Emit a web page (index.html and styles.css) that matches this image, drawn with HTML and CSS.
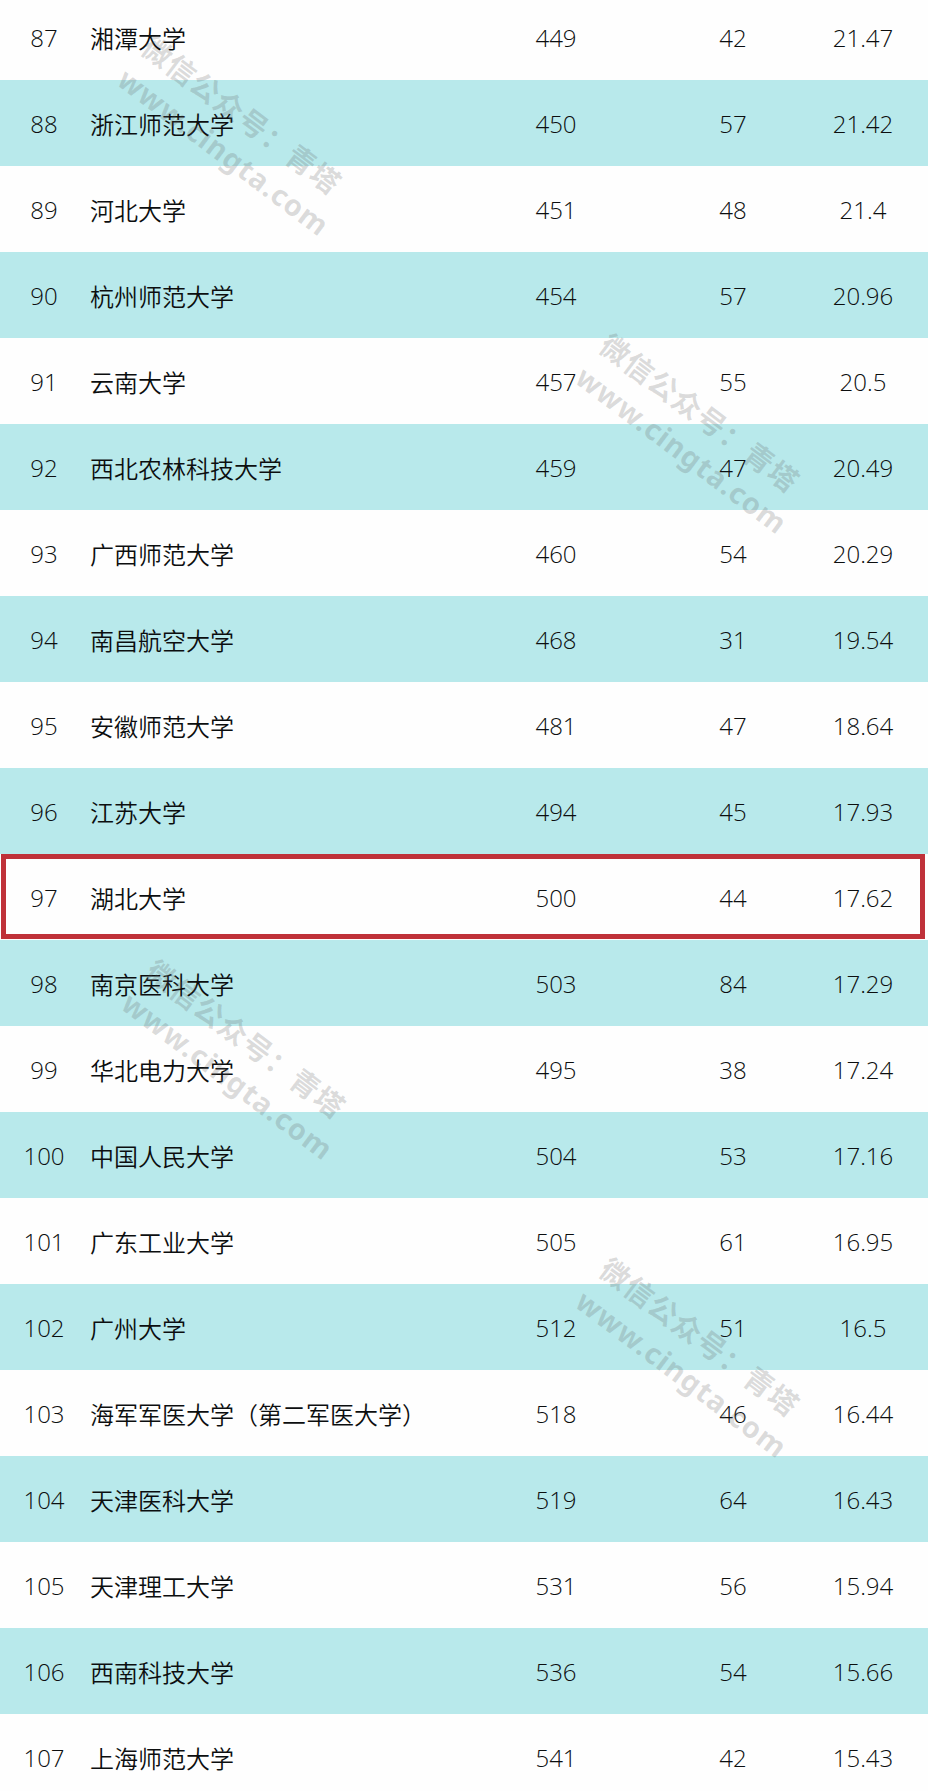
FILE: index.html
```html
<!DOCTYPE html>
<html lang="zh-CN">
<head>
<meta charset="utf-8">
<title>排名</title>
<link rel="stylesheet" href="styles.css">
</head>
<body>
<div class="page">
  <div class="table">
    <div class="row"><span class="c-rank">87</span><span class="c-name">湘潭大学</span><span class="c-num">449</span><span class="c-num">42</span><span class="c-num">21.47</span></div>
    <div class="row"><span class="c-rank">88</span><span class="c-name">浙江师范大学</span><span class="c-num">450</span><span class="c-num">57</span><span class="c-num">21.42</span></div>
    <div class="row"><span class="c-rank">89</span><span class="c-name">河北大学</span><span class="c-num">451</span><span class="c-num">48</span><span class="c-num">21.4</span></div>
    <div class="row"><span class="c-rank">90</span><span class="c-name">杭州师范大学</span><span class="c-num">454</span><span class="c-num">57</span><span class="c-num">20.96</span></div>
    <div class="row"><span class="c-rank">91</span><span class="c-name">云南大学</span><span class="c-num">457</span><span class="c-num">55</span><span class="c-num">20.5</span></div>
    <div class="row"><span class="c-rank">92</span><span class="c-name">西北农林科技大学</span><span class="c-num">459</span><span class="c-num">47</span><span class="c-num">20.49</span></div>
    <div class="row"><span class="c-rank">93</span><span class="c-name">广西师范大学</span><span class="c-num">460</span><span class="c-num">54</span><span class="c-num">20.29</span></div>
    <div class="row"><span class="c-rank">94</span><span class="c-name">南昌航空大学</span><span class="c-num">468</span><span class="c-num">31</span><span class="c-num">19.54</span></div>
    <div class="row"><span class="c-rank">95</span><span class="c-name">安徽师范大学</span><span class="c-num">481</span><span class="c-num">47</span><span class="c-num">18.64</span></div>
    <div class="row"><span class="c-rank">96</span><span class="c-name">江苏大学</span><span class="c-num">494</span><span class="c-num">45</span><span class="c-num">17.93</span></div>
    <div class="row highlight"><span class="c-rank">97</span><span class="c-name">湖北大学</span><span class="c-num">500</span><span class="c-num">44</span><span class="c-num">17.62</span></div>
    <div class="row"><span class="c-rank">98</span><span class="c-name">南京医科大学</span><span class="c-num">503</span><span class="c-num">84</span><span class="c-num">17.29</span></div>
    <div class="row"><span class="c-rank">99</span><span class="c-name">华北电力大学</span><span class="c-num">495</span><span class="c-num">38</span><span class="c-num">17.24</span></div>
    <div class="row"><span class="c-rank">100</span><span class="c-name">中国人民大学</span><span class="c-num">504</span><span class="c-num">53</span><span class="c-num">17.16</span></div>
    <div class="row"><span class="c-rank">101</span><span class="c-name">广东工业大学</span><span class="c-num">505</span><span class="c-num">61</span><span class="c-num">16.95</span></div>
    <div class="row"><span class="c-rank">102</span><span class="c-name">广州大学</span><span class="c-num">512</span><span class="c-num">51</span><span class="c-num">16.5</span></div>
    <div class="row"><span class="c-rank">103</span><span class="c-name">海军军医大学（第二军医大学）</span><span class="c-num">518</span><span class="c-num">46</span><span class="c-num">16.44</span></div>
    <div class="row"><span class="c-rank">104</span><span class="c-name">天津医科大学</span><span class="c-num">519</span><span class="c-num">64</span><span class="c-num">16.43</span></div>
    <div class="row"><span class="c-rank">105</span><span class="c-name">天津理工大学</span><span class="c-num">531</span><span class="c-num">56</span><span class="c-num">15.94</span></div>
    <div class="row"><span class="c-rank">106</span><span class="c-name">西南科技大学</span><span class="c-num">536</span><span class="c-num">54</span><span class="c-num">15.66</span></div>
    <div class="row"><span class="c-rank">107</span><span class="c-name">上海师范大学</span><span class="c-num">541</span><span class="c-num">42</span><span class="c-num">15.43</span></div>
  </div>
  <div class="wm wm-1"><span>微信公众号：青塔</span><span>www.cingta.com</span></div>
  <div class="wm wm-2"><span>微信公众号：青塔</span><span>www.cingta.com</span></div>
  <div class="wm wm-3"><span>微信公众号：青塔</span><span>www.cingta.com</span></div>
  <div class="wm wm-4"><span>微信公众号：青塔</span><span>www.cingta.com</span></div>
</div>
</body>
</html>
```

FILE: styles.css
```css
html, body {
  margin: 0;
  padding: 0;
  background: #fefefe;
}

.page {
  position: relative;
  width: 928px;
  height: 1791px;
  overflow: hidden;
  font-family: "Open Sans", "Noto Sans CJK SC", sans-serif;
  color: #0c0e0f;
}

.table {
  margin-top: -6px;
  display: flex;
  flex-direction: column;
}

.row {
  position: relative;
  height: 86px;
  display: grid;
  grid-template-columns: 88px 378px 180px 174px 86px;
  align-items: center;
  font-size: 24px;
  font-weight: 300;
  background: #fefefe;
}

.row:nth-child(even) {
  background: #b8e9eb;
}

.c-rank {
  text-align: center;
}

.c-name {
  padding-left: 2px;
  font-family: "Noto Sans CJK SC", sans-serif;
  font-weight: 350;
  white-space: nowrap;
}

.c-num {
  text-align: center;
}

.highlight::after {
  content: "";
  position: absolute;
  left: 1px;
  right: 3px;
  top: 0;
  bottom: 1px;
  border: 5px solid #bf3139;
}

.wm {
  position: absolute;
  display: flex;
  flex-direction: column;
  align-items: flex-start;
  line-height: 40px;
  font-family: "Noto Sans", "Noto Sans CJK SC", sans-serif;
  font-weight: 700;
  font-size: 29px;
  letter-spacing: 1px;
  color: rgba(95, 95, 95, 0.22);
  white-space: nowrap;
  transform: translate(-50%, -50%) rotate(37deg);
  pointer-events: none;
}

.wm-1 { left: 236px; top: 136px; }
.wm-2 { left: 694px; top: 434px; }
.wm-3 { left: 240px; top: 1060px; }
.wm-4 { left: 694px; top: 1358px; }
```
